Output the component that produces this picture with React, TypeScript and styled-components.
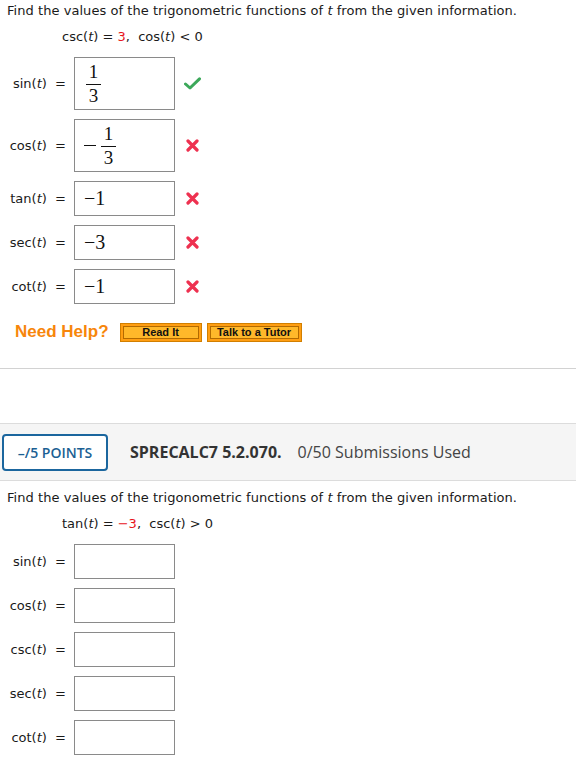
import styled, { createGlobalStyle } from "styled-components";

const Global = createGlobalStyle`
  body {
    margin: 0;
    background: #fff;
    font-family: "DejaVu Sans", Verdana, sans-serif;
    font-size: 13px;
    color: #1a1a1a;
  }
`;

const Question = styled.div`
  padding-top: 3px;
`;

const Prompt = styled.div`
  line-height: 16px;
  margin-left: 7px;
  letter-spacing: 0.05px;
`;

const Given = styled.div`
  line-height: 16px;
  margin: 10px 0 12px 62px;
`;

const Red = styled.span`
  color: #e8141c;
`;

const Rows = styled.div`
  display: flex;
  flex-direction: column;
  gap: 9px;
`;

const Row = styled.div`
  display: flex;
  align-items: center;
`;

const Label = styled.div`
  width: 66px;
  text-align: right;
  white-space: pre;
`;

const Box = styled.div<{ $tall?: boolean }>`
  margin-left: 8px;
  width: 101px;
  height: ${(p) => (p.$tall ? 53 : 35)}px;
  box-sizing: border-box;
  border: 1px solid #8a8a8a;
  display: flex;
  align-items: center;
  padding-left: 9px;
  font-family: "Liberation Serif", "Times New Roman", serif;
  font-size: 20px;
  color: #111;
`;

const Minus = styled.span`
  display: inline-block;
  width: 12px;
  height: 1px;
  background: #111;
  margin-right: 3px;
`;

const Frac = styled.span`
  display: inline-flex;
  flex-direction: column;
  align-items: center;
  font-size: 19px;
  line-height: 20px;
  margin-left: 2px;
`;

const Bar = styled.span`
  display: block;
  width: 15px;
  height: 1px;
  background: #111;
  margin: 2px 0 1px;
`;

const Mark = styled.div`
  margin-left: 8px;
  width: 18px;
  height: 16px;
  display: flex;
  align-items: center;
  justify-content: center;
`;

const Help = styled.div`
  display: flex;
  align-items: center;
  margin: 18px 0 0 15px;
  height: 20px;
`;

const HelpText = styled.span`
  font-family: "Liberation Sans", Arial, sans-serif;
  font-weight: bold;
  font-size: 17px;
  color: #f7860b;
  margin-right: 11px;
`;

const HelpButton = styled.div<{ $w: number }>`
  width: ${(p) => p.$w}px;
  height: 19px;
  box-sizing: border-box;
  border: 1px solid #d27f00;
  background: #ff9e12;
  padding: 2px 2px;
  margin-right: 5px;
  display: flex;
`;

const HelpInner = styled.span`
  flex: 1;
  border: 1px solid #b36a00;
  background: #ffb82a;
  font-family: "Liberation Sans", Arial, sans-serif;
  font-weight: bold;
  font-size: 11px;
  line-height: 11px;
  color: #111;
  display: flex;
  align-items: center;
  justify-content: center;
`;

const Divider = styled.hr`
  margin: 26px 0 0;
  border: none;
  border-top: 1px solid #d2d2d2;
`;

const Header = styled.div`
  margin-top: 54px;
  border-top: 1px solid #dcdcdc;
  border-bottom: 1px solid #dcdcdc;
  background: #f5f5f5;
  height: 56px;
  display: flex;
  align-items: center;
  padding-left: 2px;
  font-family: "Open Sans", sans-serif;
`;

const Points = styled.div`
  width: 106px;
  height: 37px;
  box-sizing: border-box;
  border: 2px solid #1b669e;
  border-radius: 4px;
  display: flex;
  align-items: center;
  justify-content: center;
  color: #1b5f93;
  font-weight: 600;
  font-size: 14px;
  background: #fff;
`;

const Code = styled.span`
  margin-left: 22px;
  font-weight: 700;
  font-size: 16px;
  color: #333;
`;

const Subs = styled.span`
  margin-left: 16px;
  font-size: 16px;
  color: #444;
`;

const Second = styled(Question)`
  padding-top: 9px;
`;

const T = () => <i>t</i>;

const Check = () => (
  <svg width="17" height="13" viewBox="0 0 17 13">
    <path d="M1.5 7 L6 11 L15.5 1.8" fill="none" stroke="#3ca85a" strokeWidth="3" strokeLinejoin="round" strokeLinecap="round" />
  </svg>
);

const Cross = () => (
  <svg width="13" height="13" viewBox="0 0 13 13">
    <path d="M2 2 L11 11 M11 2 L2 11" stroke="#ee3150" strokeWidth="3.2" strokeLinecap="round" />
  </svg>
);

const Fraction = ({ n, d }: { n: string; d: string }) => (
  <Frac>
    <span>{n}</span>
    <Bar />
    <span>{d}</span>
  </Frac>
);

const fn = (name: string) => (
  <Label>
    {name}(<T />)  =
  </Label>
);

const App = () => {
  return (
    <>
      <Global />
      <Question>
        <Prompt>
          Find the values of the trigonometric functions of <T /> from the given information.
        </Prompt>
        <Given>
          csc(<T />) = <Red>3</Red>,&nbsp; cos(<T />) &lt; 0
        </Given>
        <Rows>
          <Row>
            {fn("sin")}
            <Box $tall>
              <Fraction n="1" d="3" />
            </Box>
            <Mark>
              <Check />
            </Mark>
          </Row>
          <Row>
            {fn("cos")}
            <Box $tall>
              <Minus />
              <Fraction n="1" d="3" />
            </Box>
            <Mark>
              <Cross />
            </Mark>
          </Row>
          <Row>
            {fn("tan")}
            <Box>−1</Box>
            <Mark>
              <Cross />
            </Mark>
          </Row>
          <Row>
            {fn("sec")}
            <Box>−3</Box>
            <Mark>
              <Cross />
            </Mark>
          </Row>
          <Row>
            {fn("cot")}
            <Box>−1</Box>
            <Mark>
              <Cross />
            </Mark>
          </Row>
        </Rows>
        <Help>
          <HelpText>Need Help?</HelpText>
          <HelpButton $w={82}>
            <HelpInner>Read It</HelpInner>
          </HelpButton>
          <HelpButton $w={95}>
            <HelpInner>Talk to a Tutor</HelpInner>
          </HelpButton>
        </Help>
      </Question>
      <Divider />
      <Header>
        <Points>–/5 POINTS</Points>
        <Code>SPRECALC7 5.2.070.</Code>
        <Subs>0/50 Submissions Used</Subs>
      </Header>
      <Second>
        <Prompt>
          Find the values of the trigonometric functions of <T /> from the given information.
        </Prompt>
        <Given>
          tan(<T />) = <Red>−3</Red>,&nbsp; csc(<T />) &gt; 0
        </Given>
        <Rows>
          {["sin", "cos", "csc", "sec", "cot"].map((f) => (
            <Row key={f}>
              {fn(f)}
              <Box />
            </Row>
          ))}
        </Rows>
      </Second>
    </>
  );
};

export default App;
